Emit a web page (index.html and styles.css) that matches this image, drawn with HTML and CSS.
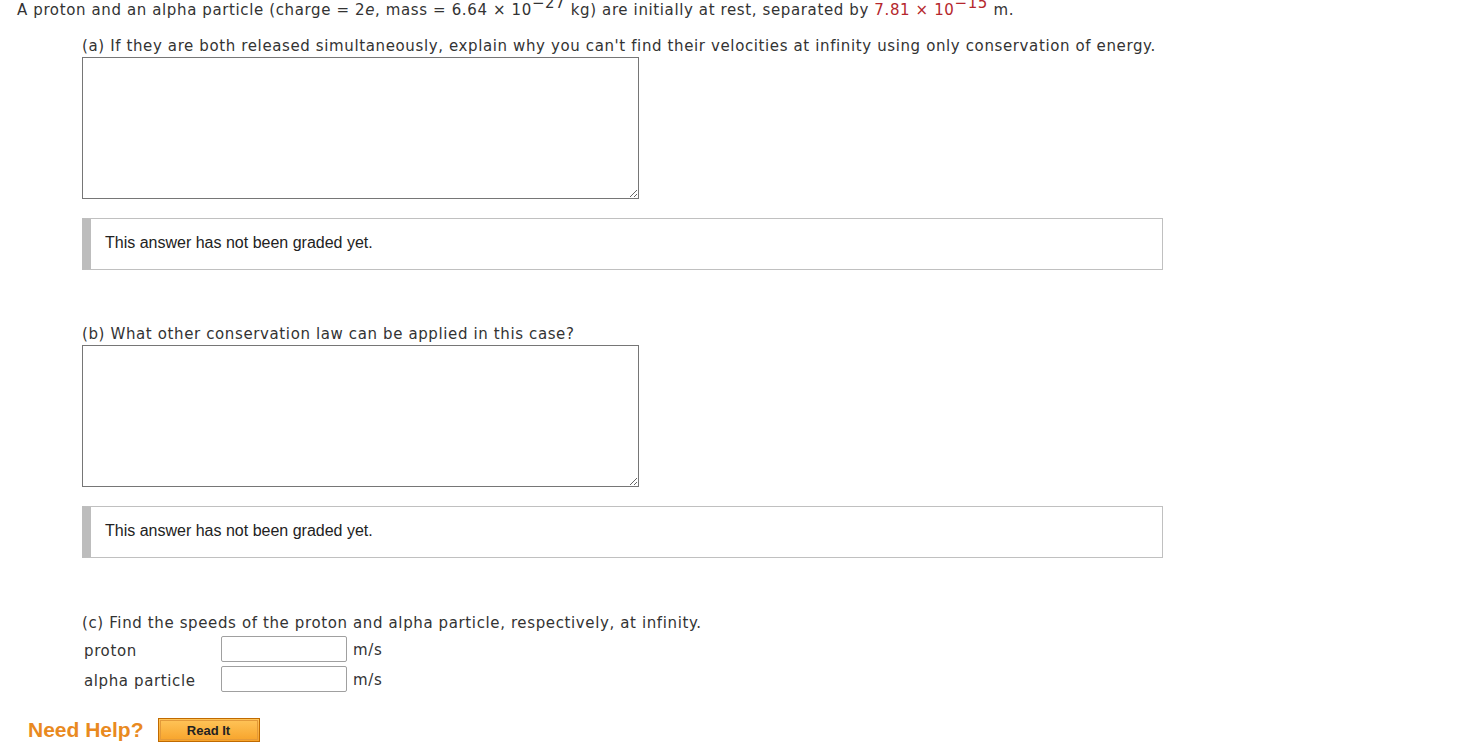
FILE: index.html
```html
<!DOCTYPE html>
<html>
<head>
<meta charset="utf-8">
<link rel="stylesheet" href="styles.css">
</head>
<body>
<div class="page">
  <p class="intro">A proton and an alpha particle (charge = 2<i>e</i>, mass = 6.64 × 10<sup>−27</sup> kg) are initially at rest, separated by <span class="red">7.81 × 10<sup>−15</sup></span> m.</p>
  <div class="part">
    <p class="q q-a">(a) If they are both released simultaneously, explain why you can't find their velocities at infinity using only conservation of energy.</p>
    <textarea class="answer"></textarea>
    <div class="graded">This answer has not been graded yet.</div>
  </div>
  <div class="part">
    <p class="q q-b">(b) What other conservation law can be applied in this case?</p>
    <textarea class="answer"></textarea>
    <div class="graded">This answer has not been graded yet.</div>
  </div>
  <div class="part">
    <p class="q q-c">(c) Find the speeds of the proton and alpha particle, respectively, at infinity.</p>
    <div class="grid">
      <span class="lbl">proton</span><input class="num" type="text"><span class="unit">m/s</span>
      <span class="lbl">alpha particle</span><input class="num" type="text"><span class="unit">m/s</span>
    </div>
  </div>
  <div class="help">
    <span class="need">Need Help?</span>
    <button class="read">Read It</button>
  </div>
</div>
</body>
</html>
```
FILE: styles.css
```css
html, body { margin: 0; padding: 0; background: #fff; }
body { font-family: "DejaVu Sans", Verdana, sans-serif; font-size: 15px; letter-spacing: 0.62px; color: #333; }
.page { padding: 0 0 0 17px; overflow: hidden; height: 742px; }
p { margin: 0; }
.intro { line-height: 20px; margin-top: 0; white-space: nowrap; }
.intro sup { font-size: 15px; line-height: 0; vertical-align: 7px; }
.red { color: #b5272d; }
.part { padding-left: 65px; }
.q { line-height: 20px; white-space: nowrap; }
.q-a { margin-top: 16px; }
.q-b { margin-top: 54px; }
.q-c { margin-top: 55px; }
.answer { display: block; box-sizing: border-box; width: 557px; height: 142px; margin: 1px 0 0 0; border: 1px solid #767676; border-radius: 0; padding: 2px; resize: vertical; font-family: inherit; }
.graded { box-sizing: border-box; width: 1081px; height: 52px; margin-top: 19px; border: 1px solid #c0c0c0; border-left: 9px solid #bdbdbd; padding: 15px 0 0 14px; font-family: "Liberation Sans", Arial, sans-serif; font-size: 16px; letter-spacing: 0; color: #222; }
.grid { display: grid; grid-template-columns: 132px 126px auto; column-gap: 5px; row-gap: 4px; align-items: center; margin-top: 3px; padding-left: 2px; }
.num { box-sizing: border-box; width: 126px; height: 26px; border: 1px solid #a0a0a0; border-radius: 2px; margin: 0; }
.unit { line-height: 20px; padding: 1px 0 0 1px; }
.lbl { line-height: 20px; padding-top: 3px; }
.help { display: flex; align-items: center; gap: 14px; margin-top: 26px; padding-left: 11px; }
.need { font-family: "Liberation Sans", Arial, sans-serif; font-weight: bold; font-size: 21px; letter-spacing: 0; color: #e98a1f; }
.read { box-sizing: border-box; width: 102px; height: 24px; border: 1px solid #c06a00; outline: 1px solid #e39a3a; outline-offset: -3px; background: linear-gradient(#ffc55a, #f7a32a); font-family: "Liberation Sans", Arial, sans-serif; font-weight: bold; font-size: 13px; letter-spacing: 0; color: #222; padding: 0; border-radius: 0; }
```
